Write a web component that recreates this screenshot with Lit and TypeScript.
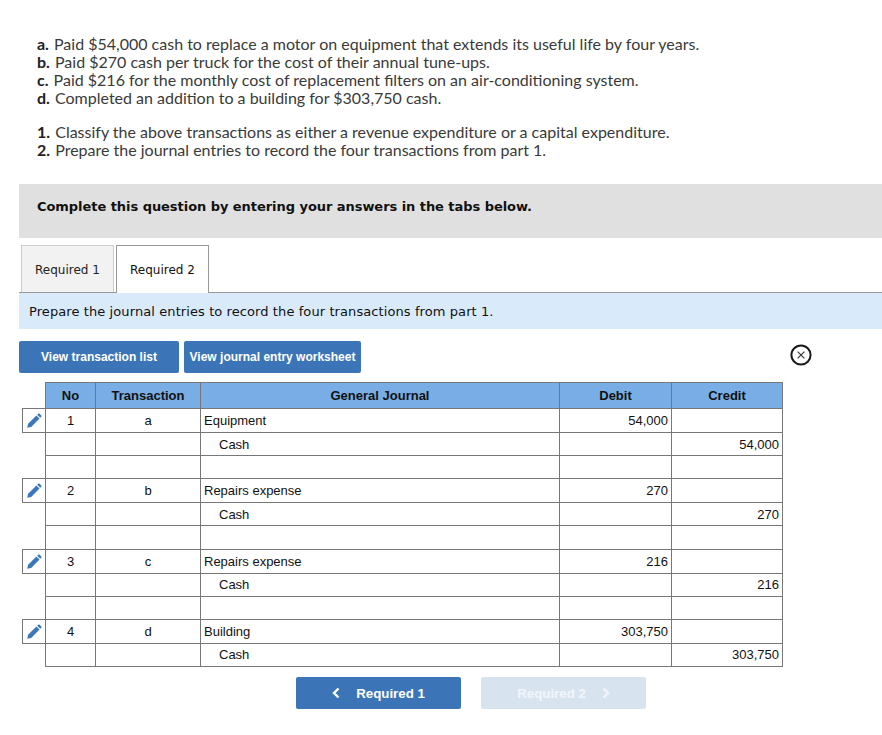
import { LitElement, html, css, nothing } from 'lit';
import { customElement } from 'lit/decorators.js';

interface Row {
  h: number;
  no?: string;
  tx?: string;
  account?: string;
  indent?: boolean;
  debit?: string;
  credit?: string;
  lift?: boolean;
}

const ROWS: Row[] = [
  { h: 24, no: '1', tx: 'a', account: 'Equipment', debit: '54,000' },
  { h: 23, account: 'Cash', indent: true, credit: '54,000' },
  { h: 23 },
  { h: 24, no: '2', tx: 'b', account: 'Repairs expense', debit: '270' },
  { h: 23, account: 'Cash', indent: true, credit: '270' },
  { h: 24 },
  { h: 24, no: '3', tx: 'c', account: 'Repairs expense', debit: '216' },
  { h: 23, account: 'Cash', indent: true, credit: '216', lift: true },
  { h: 23 },
  { h: 24, no: '4', tx: 'd', account: 'Building', debit: '303,750' },
  { h: 23, account: 'Cash', indent: true, credit: '303,750', lift: true },
];

const pencil = html`<svg class="pencil" viewBox="0 0 16 16" aria-hidden="true">
  <path fill="#3b78bb" d="M1.2 14.8l.9-4 8.3-8.3 3.1 3.1-8.3 8.3z" />
  <path fill="#3b78bb" d="M11.2 1.7l1-1c.4-.4 1-.4 1.4 0l1.7 1.7c.4.4.4 1 0 1.4l-1 1z" />
</svg>`;

@customElement('app-root')
export class AppRoot extends LitElement {
  static styles = css`
    :host {
      display: block;
      width: 882px;
      height: 735px;
      background: #fff;
      color: #2d2d2d;
      overflow: hidden;
    }

    .prompt {
      font-family: Lato, sans-serif;
      font-size: 16px;
      line-height: 18px;
      color: #3a3a3a;
      padding: 35px 0 0 37px;
    }

    .prompt p {
      margin: 0;
    }

    .prompt b {
      font-weight: 700;
      color: #222;
      margin-right: 1px;
    }

    .parts {
      margin-top: 16px !important;
    }

    .instruction {
      margin: 25px 0 0 19px;
      height: 54px;
      background: #e0e0e0;
      display: flex;
      align-items: center;
      padding-left: 18px;
      padding-bottom: 10px;
      font-family: Verdana, 'DejaVu Sans', sans-serif;
      font-size: 13px;
      font-weight: 700;
      letter-spacing: -0.05px;
      color: #111;
      box-sizing: border-box;
    }

    .tabs {
      margin: 7px 0 0 19px;
      height: 47px;
      display: flex;
      gap: 2px;
      padding-left: 2px;
      border-bottom: 1px solid #999;
      font-family: Verdana, 'DejaVu Sans', sans-serif;
      font-size: 12px;
    }

    .tab {
      box-sizing: border-box;
      height: 47px;
      width: 93px;
      padding-top: 2px;
      display: flex;
      align-items: center;
      justify-content: center;
      background: #f2f2f2;
      border: 1px solid #ccc;
      border-bottom: none;
      color: #222;
    }

    .tab.active {
      background: #fff;
      border-color: #999;
      height: 48px;
      padding-top: 1px;
      color: #111;
      z-index: 1;
    }

    .hint {
      margin-left: 19px;
      height: 36px;
      background: #d9ebfa;
      display: flex;
      align-items: center;
      padding-left: 10px;
      padding-top: 1px;
      box-sizing: border-box;
      font-family: Verdana, 'DejaVu Sans', sans-serif;
      font-size: 13px;
      letter-spacing: 0.09px;
      color: #111;
    }

    .actions {
      margin: 12px 0 0 19px;
      display: flex;
      align-items: center;
      gap: 5px;
      position: relative;
      height: 32px;
    }

    .btn {
      height: 32px;
      display: flex;
      align-items: center;
      justify-content: center;
      background: #3b75b8;
      color: #fff;
      border-radius: 2px;
      font-family: 'Liberation Sans', Arial, sans-serif;
      font-size: 12px;
      font-weight: 700;
    }

    .close {
      position: absolute;
      left: 771px;
      top: 3px;
      width: 22px;
      height: 22px;
    }

    .journal {
      border-collapse: collapse;
      table-layout: fixed;
      width: 760px;
      margin: 9px 0 0 22px;
      font-family: 'Liberation Sans', Arial, sans-serif;
      font-size: 13px;
      color: #111;
    }

    .journal th,
    .journal td {
      border: 1px solid #777;
      padding: 0;
      box-sizing: border-box;
      overflow: hidden;
      white-space: nowrap;
    }

    .journal th {
      background: #78aee5;
      font-weight: 700;
      height: 26px;
      text-align: center;
    }

    .journal th.blank,
    .journal td.blank {
      background: none;
      border-top: none;
      border-bottom: none;
      border-left: none;
    }

    .journal td.center {
      text-align: center;
    }

    .journal td.num {
      text-align: right;
      padding-right: 3px;
    }

    .journal td.account {
      padding-left: 3px;
    }

    .journal td.account.indent {
      padding-left: 18px;
    }

    .journal tr.lift td {
      padding-bottom: 2px;
    }

    .journal td.edit {
      text-align: center;
      line-height: 0;
    }

    .pencil {
      width: 16px;
      height: 16px;
      vertical-align: middle;
    }

    .pager {
      margin: 10px 0 0 296px;
      display: flex;
      gap: 20px;
    }

    .page-btn {
      width: 165px;
      height: 32px;
      display: flex;
      align-items: center;
      justify-content: center;
      gap: 16px;
      border-radius: 2px;
      background: #3b75b8;
      color: #fff;
      font-family: 'Liberation Sans', Arial, sans-serif;
      font-size: 13.3px;
      font-weight: 700;
    }

    .page-btn.disabled {
      background: #d8e3f0;
      color: #f2f6fb;
    }

    .chev {
      width: 8px;
      height: 12px;
    }
  `;

  private renderRow(r: Row) {
    return html`<tr class=${r.lift ? 'lift' : ''} style="height:${r.h}px">
      ${r.no
        ? html`<td class="edit">${pencil}</td>`
        : html`<td class="blank"></td>`}
      <td class="center">${r.no ?? nothing}</td>
      <td class="center">${r.tx ?? nothing}</td>
      <td class="account ${r.indent ? 'indent' : ''}">${r.account ?? nothing}</td>
      <td class="num">${r.debit ?? nothing}</td>
      <td class="num">${r.credit ?? nothing}</td>
    </tr>`;
  }

  render() {
    return html`
      <div class="prompt">
        <p><b>a.</b> Paid $54,000 cash to replace a motor on equipment that extends its useful life by four years.</p>
        <p><b>b.</b> Paid $270 cash per truck for the cost of their annual tune-ups.</p>
        <p><b>c.</b> Paid $216 for the monthly cost of replacement filters on an air-conditioning system.</p>
        <p><b>d.</b> Completed an addition to a building for $303,750 cash.</p>
        <p class="parts"><b>1.</b> Classify the above transactions as either a revenue expenditure or a capital expenditure.</p>
        <p><b>2.</b> Prepare the journal entries to record the four transactions from part 1.</p>
      </div>

      <div class="instruction">Complete this question by entering your answers in the tabs below.</div>

      <div class="tabs">
        <div class="tab">Required 1</div>
        <div class="tab active">Required 2</div>
      </div>
      <div class="hint">Prepare the journal entries to record the four transactions from part 1.</div>

      <div class="actions">
        <div class="btn" style="width:160px">View transaction list</div>
        <div class="btn" style="width:177px">View journal entry worksheet</div>
        <svg class="close" viewBox="0 0 22 22" aria-hidden="true">
          <circle cx="11" cy="11" r="9.6" fill="none" stroke="#1a1a1a" stroke-width="2" />
          <path d="M7.6 7.6l6.8 6.8M14.4 7.6l-6.8 6.8" stroke="#333" stroke-width="1.1" fill="none" />
        </svg>
      </div>

      <table class="journal">
        <colgroup>
          <col style="width:23px" />
          <col style="width:50px" />
          <col style="width:105px" />
          <col style="width:359px" />
          <col style="width:112px" />
          <col style="width:111px" />
        </colgroup>
        <thead>
          <tr>
            <th class="blank"></th>
            <th>No</th>
            <th>Transaction</th>
            <th>General Journal</th>
            <th>Debit</th>
            <th>Credit</th>
          </tr>
        </thead>
        <tbody>
          ${ROWS.map((r) => this.renderRow(r))}
        </tbody>
      </table>

      <div class="pager">
        <div class="page-btn">
          <svg class="chev" viewBox="0 0 8 12" aria-hidden="true">
            <path d="M6.5 1.5L2 6l4.5 4.5" fill="none" stroke="#fff" stroke-width="2.4" />
          </svg>
          Required 1
        </div>
        <div class="page-btn disabled">
          Required 2
          <svg class="chev" viewBox="0 0 8 12" aria-hidden="true">
            <path d="M1.5 1.5L6 6l-4.5 4.5" fill="none" stroke="#f2f6fb" stroke-width="2.4" />
          </svg>
        </div>
      </div>
    `;
  }
}

declare global {
  interface HTMLElementTagNameMap {
    'app-root': AppRoot;
  }
}
